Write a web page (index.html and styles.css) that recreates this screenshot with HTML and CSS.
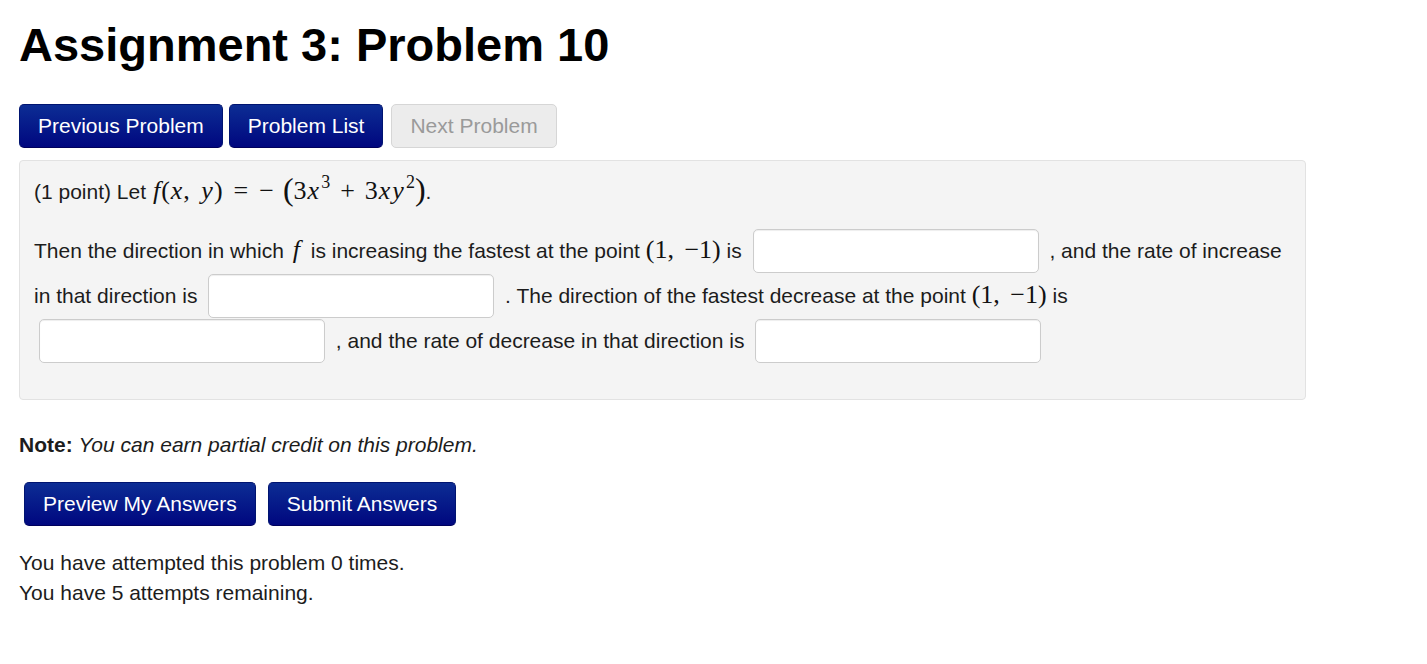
FILE: index.html
```html
<!DOCTYPE html>
<html>
<head>
<meta charset="utf-8">
<link rel="stylesheet" href="styles.css">
</head>
<body>
<div class="page">
  <h2 class="title">Assignment 3: Problem 10</h2>
  <div class="nav">
    <a class="btn btn-primary">Previous Problem</a>
    <a class="btn btn-primary">Problem List</a>
    <a class="btn btn-disabled">Next Problem</a>
  </div>
  <div class="well">
    <p class="p1">(1 point) Let <span class="math"><i>f</i>(<i>x</i>,<span class="thin"></span> <i>y</i>)<span class="rel">=</span>−<span class="sp"></span><span class="big">(</span>3<i>x</i><sup>3</sup><span class="bin">+</span>3<i>x</i><i>y</i><sup>2</sup><span class="big">)</span></span>.</p>
    <p class="p2">Then the direction in which <span class="math"><i class="fv">f</i></span> is increasing the fastest at the point <span class="math">(1,<span class="thin"></span> −1)</span> is <input class="ans" type="text"> , and the rate of increase in that direction is <input class="ans" type="text"> . The direction of the fastest decrease at the point <span class="math">(1,<span class="thin"></span> −1)</span> is <input class="ans" type="text"> , and the rate of decrease in that direction is <input class="ans" type="text"></p>
  </div>
  <p class="note"><b>Note:</b> <i>You can earn partial credit on this problem.</i></p>
  <div class="actions">
    <a class="btn btn-primary">Preview My Answers</a>
    <a class="btn btn-primary">Submit Answers</a>
  </div>
  <p class="attempts">You have attempted this problem 0 times.<br>You have 5 attempts remaining.</p>
</div>
</body>
</html>
```
FILE: styles.css
```css
html, body {
  margin: 0;
  padding: 0;
  background: #ffffff;
}
body {
  font-family: "Liberation Sans", Arial, sans-serif;
  font-size: 21px;
  line-height: 30px;
  color: #1c1c1c;
}
.page {
  padding: 0 0 0 19px;
}
.title {
  margin: 0;
  padding-top: 15px;
  font-size: 47px;
  line-height: 60px;
  font-weight: bold;
  color: #000;
}
.nav {
  margin-top: 29px;
  display: flex;
  gap: 6px;
}
.btn {
  display: inline-block;
  box-sizing: border-box;
  height: 44px;
  padding: 6px 18px;
  line-height: 30px;
  font-size: 21px;
  border-radius: 5px;
  border: 1px solid;
  white-space: nowrap;
}
.btn-primary {
  color: #ffffff;
  background: linear-gradient(#0c2d94, #00077f);
  border-color: #001470 #001470 #00005c;
}
.btn-disabled {
  color: #9a9a9a;
  background: #ececec;
  border-color: #d6d6d6;
  margin-left: 2px;
}
.well {
  margin-top: 12px;
  width: 1287px;
  box-sizing: border-box;
  padding: 14px 14px 1px 14px;
  background: #f4f4f4;
  border: 1px solid #e2e2e2;
  border-radius: 4px;
}
.well p {
  margin: 0;
}
.p1 {
  padding-top: 2px;
  margin-bottom: 21px !important;
}
.p2 {
  line-height: 45px;
  margin-bottom: 35px !important;
}
.math {
  font-family: "Liberation Serif", "Times New Roman", serif;
  font-size: 26px;
  line-height: 1;
  color: #111;
}
.math i {
  font-style: italic;
  padding: 0 1px;
}
.math .fv {
  padding: 0 5px 0 3px;
}
.math sup {
  font-size: 18px;
  line-height: 0;
  vertical-align: 11px;
  margin-left: 1px;
}
.rel {
  margin: 0 11px;
}
.bin {
  margin: 0 10px;
}
.thin {
  display: inline-block;
  width: 4px;
}
.sp {
  display: inline-block;
  width: 9px;
}
.big {
  font-size: 32px;
  line-height: 0;
  vertical-align: -1px;
}
.ans {
  box-sizing: border-box;
  width: 286px;
  height: 44px;
  margin: 1px 5px 0 5px;
  padding: 6px 9px;
  border: 1px solid #cccccc;
  border-radius: 5px;
  background: #ffffff;
  box-shadow: inset 0 1px 1px rgba(0,0,0,0.07);
  vertical-align: top;
  font-size: 21px;
  font-family: "Liberation Sans", Arial, sans-serif;
}
.note {
  margin: 30px 0 0 0;
}
.actions {
  margin-top: 22px;
  margin-left: 5px;
  display: flex;
  gap: 12px;
}
.attempts {
  margin: 22px 0 0 0;
}
```
